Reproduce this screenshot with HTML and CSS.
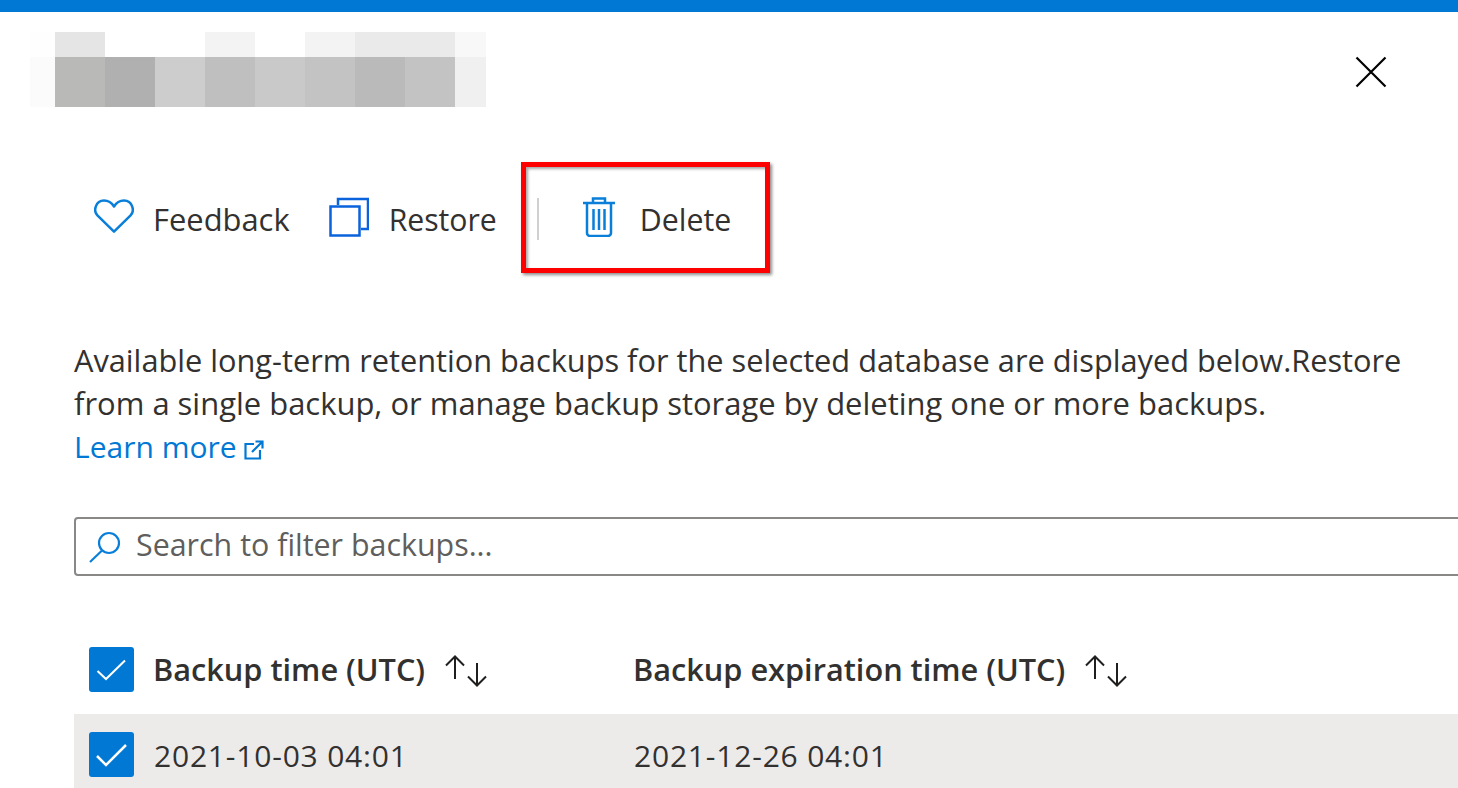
FILE: index.html
```html
<!DOCTYPE html>
<html lang="en">
<head>
<meta charset="utf-8">
<title>Long-term retention backups</title>
<link rel="stylesheet" href="styles.css">
</head>
<body>
<div class="topbar"></div>
<header class="header">
  <div class="mosaic" aria-hidden="true">
    <i class="m1"></i><i class="m2"></i><i class="m0"></i><i class="m0"></i><i class="m3"></i><i class="m0"></i><i class="m3"></i><i class="m4"></i><i class="m4"></i><i class="m5"></i>
    <i class="m6"></i><i class="m7"></i><i class="m8"></i><i class="m9"></i><i class="m10"></i><i class="m11"></i><i class="m12"></i><i class="m13"></i><i class="m12"></i><i class="m14"></i>
  </div>
  <button class="close" aria-label="Close">
    <svg width="32" height="32" viewBox="0 0 32 32"><path d="M1.500 1.500 30.500 30.500M30.500 1.500 1.500 30.500" fill="none" stroke="#000" stroke-width="2.200"/></svg>
  </button>
</header>
<nav class="toolbar">
  <div class="tool tool-feedback">
    <svg class="ico" width="40" height="34" viewBox="0 0 40 34"><path d="M20 32.600 3.400 16.400C-1 12 1.500 1.500 10 1.500c4.200 0 7.800 2.400 10 6 2.200-3.600 5.800-6 10-6 8.500 0 11 10.500 6.600 14.900Z" fill="none" stroke="#0a7fd9" stroke-width="2.500" stroke-linejoin="round"/></svg>
    <span>Feedback</span>
  </div>
  <div class="tool tool-restore">
    <svg class="ico" width="40" height="40" viewBox="0 0 40 40"><path d="M9 8V2h30v30h-7" fill="none" stroke="#0a62dc" stroke-width="2.500"/><rect x="1.500" y="9.500" width="29" height="29" fill="none" stroke="#0a62dc" stroke-width="2.500"/></svg>
    <span>Restore</span>
  </div>
  <div class="sep"></div>
  <div class="tool tool-delete">
    <svg class="ico" width="32" height="40" viewBox="0 0 32 40"><path d="M0 6h32M4 6v30a3 3 0 0 0 3 3h18a3 3 0 0 0 3-3V6M10 6V1.500h12V6" fill="none" stroke="#0a7fd9" stroke-width="2.500"/><path d="M10.500 12v21M16 12v21M21.500 12v21" fill="none" stroke="#0a7fd9" stroke-width="2.500"/></svg>
    <span>Delete</span>
  </div>
  <div class="highlight"></div>
</nav>
<section class="intro">
  <p><span class="line1">Available long-term retention backups for the selected database are displayed below.Restore</span><br><span class="line2">from a single backup, or manage backup storage by deleting one or more backups.</span><br>
  <a href="#" class="link">Learn more<svg class="ext" width="20" height="20" viewBox="0 0 20 20"><path d="M10 4H1.500v14.500H16V10M8 12 18.500 1.500M11.500 1.500h7v7" fill="none" stroke="#0078d4" stroke-width="2.200"/></svg></a></p>
</section>
<div class="search">
  <svg class="search-ico" width="32" height="32" viewBox="0 0 32 32"><circle cx="20" cy="12" r="10" fill="none" stroke="#0a7fd9" stroke-width="2.200"/><path d="M13 19.500 1 31" fill="none" stroke="#0a7fd9" stroke-width="2.200"/></svg>
  <span class="search-text">Search to filter backups...</span>
</div>
<div class="table">
  <div class="row head">
    <span class="check"><svg width="45" height="45" viewBox="0 0 45 45"><path d="M8.500 24 17 32 36 13.500" fill="none" stroke="#fff" stroke-width="2"/></svg></span>
    <div class="cell first"><b>Backup time (UTC)</b><svg class="sort" width="42" height="32" viewBox="0 0 42 32"><path d="M10 24V2M1 10.500 10 1.500l9 9M32 8v22M23 21.500l9 9 9-9" fill="none" stroke="#201f1e" stroke-width="2"/></svg></div>
    <div class="cell"><b>Backup expiration time (UTC)</b><svg class="sort" width="42" height="32" viewBox="0 0 42 32"><path d="M10 24V2M1 10.500 10 1.500l9 9M32 8v22M23 21.500l9 9 9-9" fill="none" stroke="#201f1e" stroke-width="2"/></svg></div>
  </div>
  <div class="row selected">
    <span class="check"><svg width="45" height="45" viewBox="0 0 45 45"><path d="M8 24 17 33 37 13" fill="none" stroke="#fff" stroke-width="2.500"/></svg></span>
    <div class="cell first">2021-10-03 04:01</div>
    <div class="cell">2021-12-26 04:01</div>
  </div>
</div>
</body>
</html>
```
FILE: styles.css
```css
* { box-sizing: border-box; }
html, body { margin: 0; height: 100%; overflow: hidden; }
body {
  background: #fff;
  color: #323130;
  font-family: "Open Sans", "Noto Sans", sans-serif;
  font-size: 30px;
  line-height: 43px;
}
.topbar { height: 12px; background: #0078d4; }
.header {
  height: 95px;
  display: flex;
  justify-content: space-between;
  padding: 20px 71px 0 30px;
}
.mosaic {
  display: grid;
  grid-template-columns: 25px repeat(8, 50px) 31px;
  grid-template-rows: 25px 50px;
}
.m0 { background: #fff; } .m1 { background: #fefefe; } .m2 { background: #e5e5e5; }
.m3 { background: #f3f3f3; } .m4 { background: #eaeaea; } .m5 { background: #f8f8f8; }
.m6 { background: #fbfbfb; } .m7 { background: #b9b9b7; } .m8 { background: #b0b0b0; }
.m9 { background: #cdcdcd; } .m10 { background: #bfbfbf; } .m11 { background: #c9c9c9; }
.m12 { background: #c3c3c3; } .m13 { background: #bababa; } .m14 { background: #f0f0f0; }
.close {
  width: 32px; height: 32px; padding: 0; margin-top: 24px;
  border: 0; background: none; display: block;
}
.close svg { display: block; }
.toolbar {
  position: relative;
  display: flex;
  align-items: center;
  height: 44px;
  margin-top: 90px;
  padding-left: 94px;
}
.tool { display: flex; align-items: center; }
.ico { display: block; flex: none; }
.tool-feedback { gap: 19px; margin-right: 39px; font-size: 30.9px; }
.tool-feedback .ico { margin-top: -6px; }
.tool-restore { gap: 20px; margin-right: 40px; font-size: 30.2px; }
.tool-restore .ico { margin-top: -4px; }
.tool-delete { gap: 25px; margin-left: 44px; font-size: 30.3px; }
.tool-delete .ico { margin-top: -4px; }
.sep { width: 2px; height: 42px; background: #d0d0d0; }
.highlight {
  position: absolute;
  left: 521px; top: -35px;
  width: 249px; height: 111px;
  border: 5px solid #f00;
  box-shadow: 2px 2px 3px rgba(0,0,0,.45), inset 2px 2px 3px rgba(0,0,0,.35);
}
.intro { margin: 98px 0 0 74px; }
.intro p { margin: 0; }
.line1 { font-size: 30.74px; }
.line2 { font-size: 30.96px; }
.link { color: #0078d4; text-decoration: none; }
.ext { margin-left: 7px; vertical-align: -2px; }
.search {
  display: flex;
  align-items: center;
  gap: 15px;
  height: 59px;
  width: 1400px;
  margin: 49px 0 0 74px;
  padding-left: 13px;
  border: 2px solid #8a8886;
  border-radius: 4px;
  color: #605e5c;
  font-size: 30.4px;
}
.search-ico { flex: none; }
.search-text { margin-bottom: 4px; }
.table { margin: 0 0 0 74px; padding-top: 68px; }
.row { display: flex; align-items: center; padding-left: 15px; }
.head { height: 50px; margin-bottom: 20px; }
.selected { height: 74px; padding-top: 18px; align-items: flex-start; background: #edebe9; letter-spacing: .8px; }
.selected .cell { margin-top: 2px; }
.selected .first { margin-left: 20px; }
.check {
  width: 45px; height: 45px; flex: none;
  border-radius: 3px; background: #0078d4;
}
.check svg { display: block; }
.cell { display: flex; align-items: center; }
.cell b { font-weight: 600; font-size: 30.7px; }
.first { width: 480px; margin-left: 19px; }
.sort { margin-left: 20px; margin-top: 4px; flex: none; }
```
